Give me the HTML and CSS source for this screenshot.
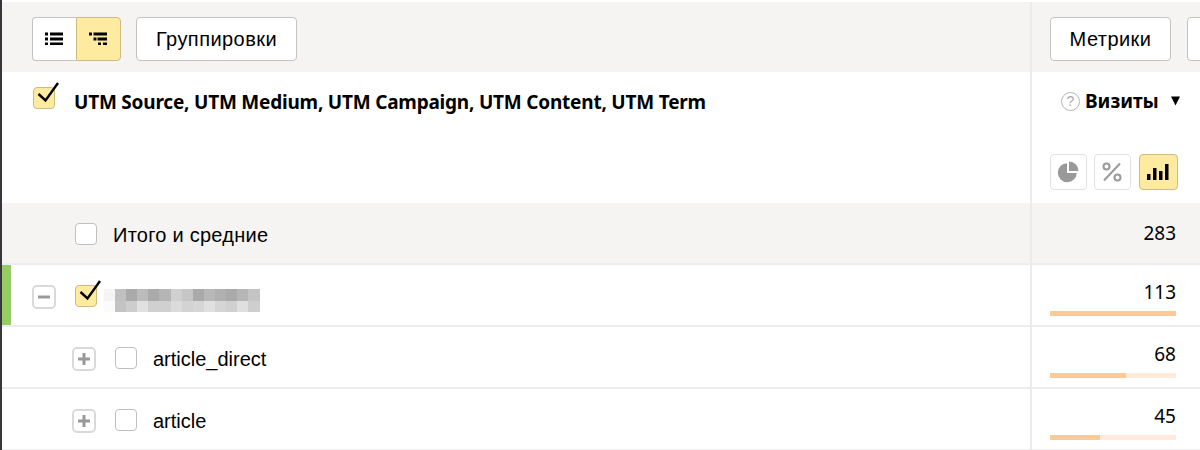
FILE: index.html
```
<!DOCTYPE html>
<html lang="ru">
<head>
  <meta charset="UTF-8" />
  <meta name="viewport" content="width=device-width, initial-scale=1.0"/>
  <title>UTM Source, UTM Medium, UTM Campaign</title>
  <link rel="stylesheet" href="styles.css">
</head>
<body>
  <div class="report">
    <!-- Dimensions -->
    <div class="column dimensions">
      <div class="toolbar">
        <div class="switcher">
          <button class="switch">
            <svg width="18" height="14" viewBox="0 0 18 14">
              <path d="M0 .5h3v3H0zM5 .5h13v3H5zM0 5.5h3v3H0zM5 5.5h13v3H5zM0 10.5h3v2.5H0zM5 10.5h13v2.5H5z"/>
            </svg>
          </button>
          <button class="switch active">
            <svg width="18" height="14" viewBox="0 0 18 14">
              <path d="M0 .5h3v3H0zM4.5 .5H18v3H4.5zM4.500 5.500h3v3h-3zM8.500 5.500h9.500v3H8.500zM9 10.500h3v2.500H9zM14 10.500h4v2.500h-4z"/>
            </svg>
          </button>
        </div>
        <button class="btn btn-groups">Группировки</button>
      </div>

      <div class="head">
        <span class="checkbox checked">
          <svg class="tick" width="28" height="26" viewBox="0 0 28 26"><path d="M5.500 13l7 6.500L25 2"/></svg>
        </span>
        <span class="title">UTM Source, UTM Medium, UTM Campaign, UTM Content, UTM Term</span>
      </div>

      <div class="row total">
        <span class="checkbox"></span>
        <span class="label">Итого и средние</span>
      </div>

      <div class="row selected">
        <span class="toggle">
          <svg width="12" height="12" viewBox="0 0 12 12"><path d="M0 6h12"/></svg>
        </span>
        <span class="checkbox checked">
          <svg class="tick" width="28" height="26" viewBox="0 0 28 26"><path d="M5.500 13l7 6.500L25 2"/></svg>
        </span>
        <!-- hidden source name -->
        <svg class="mosaic" width="156" height="23" viewBox="0 0 156 23" shape-rendering="crispEdges">
          <rect x="0" y="0" width="11" height="12" fill="#f4f4f4"/>
          <rect x="11" y="0" width="11" height="12" fill="#c0c0c0"/>
          <rect x="22" y="0" width="11" height="12" fill="#aaaaaa"/>
          <rect x="33" y="0" width="11" height="12" fill="#bbbbbb"/>
          <rect x="44" y="0" width="11" height="12" fill="#aaaaaa"/>
          <rect x="55" y="0" width="12" height="12" fill="#b5b5b5"/>
          <rect x="67" y="0" width="11" height="12" fill="#d0d0d0"/>
          <rect x="78" y="0" width="11" height="12" fill="#c6c6c6"/>
          <rect x="89" y="0" width="11" height="12" fill="#aaaaaa"/>
          <rect x="100" y="0" width="11" height="12" fill="#b8b8b8"/>
          <rect x="111" y="0" width="11" height="12" fill="#b0b0b0"/>
          <rect x="122" y="0" width="11" height="12" fill="#aaaaaa"/>
          <rect x="133" y="0" width="11" height="12" fill="#b6b6b6"/>
          <rect x="144" y="0" width="12" height="12" fill="#c4c4c4"/>
          <rect x="0" y="12" width="11" height="11" fill="#fbfbfb"/>
          <rect x="11" y="12" width="11" height="11" fill="#c3c3c3"/>
          <rect x="22" y="12" width="11" height="11" fill="#cdcdcd"/>
          <rect x="33" y="12" width="11" height="11" fill="#e1e1e1"/>
          <rect x="44" y="12" width="23" height="11" fill="#d0d0d0"/>
          <rect x="67" y="12" width="11" height="11" fill="#dbdbdb"/>
          <rect x="78" y="12" width="11" height="11" fill="#d3d3d3"/>
          <rect x="89" y="12" width="11" height="11" fill="#d6d6d6"/>
          <rect x="100" y="12" width="11" height="11" fill="#e0e0e0"/>
          <rect x="111" y="12" width="11" height="11" fill="#d5d5d5"/>
          <rect x="122" y="12" width="11" height="11" fill="#d0d0d0"/>
          <rect x="133" y="12" width="11" height="11" fill="#dfdfdf"/>
          <rect x="144" y="12" width="12" height="11" fill="#cecece"/>
        </svg>
      </div>

      <div class="row child">
        <span class="toggle">
          <svg width="12" height="12" viewBox="0 0 12 12"><path d="M0 6h12M6 0v12"/></svg>
        </span>
        <span class="checkbox"></span>
        <span class="label">article_direct</span>
      </div>

      <div class="row child">
        <span class="toggle">
          <svg width="12" height="12" viewBox="0 0 12 12"><path d="M0 6h12M6 0v12"/></svg>
        </span>
        <span class="checkbox"></span>
        <span class="label">article</span>
      </div>
    </div>

    <!-- Metrics -->
    <div class="column metrics">
      <div class="toolbar">
        <button class="btn btn-metrics">Метрики</button>
        <button class="btn btn-next"></button>
      </div>

      <div class="head">
        <div class="metric-name">
          <span class="help">?</span>
          <span class="title">Визиты</span>
          <svg class="arrow" width="9" height="10" viewBox="0 0 9 10"><path d="M0 .5h9L4.500 9.500z"/></svg>
        </div>
        <div class="views">
          <button class="view">
            <svg width="22" height="22" viewBox="0 0 22 22">
              <path d="M10 2.200A9.500 9.500 0 1 0 19.800 12H10z"/>
              <path d="M12 0.500A9.500 9.500 0 0 1 21.500 10H12z"/>
            </svg>
          </button>
          <button class="view">
            <svg class="percent" width="20" height="20" viewBox="0 0 20 20">
              <circle cx="4.500" cy="4.500" r="3"/>
              <circle cx="15.500" cy="15.500" r="3"/>
              <path d="M18 1.500L2 18.500"/>
            </svg>
          </button>
          <button class="view active">
            <svg width="22" height="16" viewBox="0 0 22 16">
              <path d="M0 10h3.500v6H0zM6 4h3.500v12H6zM12 7h3.500v9H12zM18 0h3.500v16H18z"/>
            </svg>
          </button>
        </div>
      </div>

      <div class="row total"><span class="value">283</span></div>
      <div class="row">
        <span class="value">113</span>
        <div class="bar"><div class="fill" style="width: 100%"></div></div>
      </div>
      <div class="row">
        <span class="value">68</span>
        <div class="bar"><div class="fill" style="width: 60%"></div></div>
      </div>
      <div class="row">
        <span class="value">45</span>
        <div class="bar"><div class="fill" style="width: 40%"></div></div>
      </div>
    </div>
  </div>
</body>
</html>
```
FILE: styles.css
```
* {
  margin: 0;
  padding: 0;
  box-sizing: border-box;
}

body {
  height: 450px;
  font-family: "Liberation Sans", Arial, sans-serif;
  font-size: 20px;
  color: #000;
  background: #fff;
  overflow: hidden;
}

.report {
  display: flex;
  height: 450px;
  border-left: 2px solid #37363a;
  padding-top: 2px;
}

.column {
  flex: none;
}

.dimensions {
  width: 1030px;
  border-right: 2px solid #ebebeb;
}

.metrics {
  width: 168px;
  overflow: hidden;
}

.toolbar {
  display: flex;
  align-items: flex-start;
  height: 70px;
  padding-top: 15px;
  background: #f5f4f2;
}

.dimensions .toolbar {
  gap: 15px;
  padding-left: 30px;
}

.metrics .toolbar {
  gap: 16px;
  padding-left: 18px;
}

.btn {
  flex: none;
  height: 44px;
  font-family: inherit;
  font-size: 20px;
  letter-spacing: 0.45px;
  color: #000;
  background: #fff;
  border: 1px solid #c4c3c1;
  border-radius: 4px;
}

.btn-groups {
  width: 161px;
}

.btn-metrics {
  width: 121px;
}

.btn-next {
  width: 60px;
}

.switcher {
  display: flex;
}

.switch {
  display: flex;
  align-items: center;
  justify-content: center;
  width: 44px;
  height: 44px;
  padding-right: 2px;
  background: #fff;
  border: 1px solid #c4c3c1;
  border-right: none;
  border-radius: 4px 0 0 4px;
}

.switch.active {
  width: 45px;
  background: #ffeba0;
  border: 1px solid #ccbc80;
  border-radius: 0 4px 4px 0;
}

.head {
  height: 131px;
}

.dimensions .head {
  display: flex;
  align-items: flex-start;
  padding: 15px 0 0 31px;
}

.title {
  font-family: "Noto Sans", sans-serif;
  font-size: 19px;
  font-weight: bold;
  line-height: 28px;
  white-space: nowrap;
}

.dimensions .title {
  margin: 1px 0 0 19px;
  letter-spacing: -0.21px;
}

.checkbox {
  position: relative;
  flex: none;
  width: 22px;
  height: 22px;
  background: #fff;
  border: 1px solid #bfbfbf;
  border-radius: 4px;
}

.checkbox.checked {
  background: #ffeba0;
  border-color: #ccbc80;
}

.tick {
  position: absolute;
  left: -1px;
  top: -7px;
  fill: none;
  stroke: #000;
  stroke-width: 2.4;
}

.row {
  height: 62px;
  border-bottom: 2px solid #ededed;
}

.row.total {
  background: #f5f4f2;
}

.dimensions .row {
  display: flex;
  align-items: center;
}

.dimensions .row .checkbox {
  margin-top: 2px;
}

.dimensions .total {
  padding-left: 73px;
}

.dimensions .selected {
  padding-left: 30px;
  background: linear-gradient(#97cc64, #97cc64) no-repeat left top / 9px 100%;
}

.dimensions .child {
  padding-left: 70px;
}

.toggle {
  display: flex;
  align-items: center;
  justify-content: center;
  width: 24px;
  height: 24px;
  margin: 3px 19px 0 0;
  border: 2px solid #d9d9d9;
  border-radius: 5px;
}

.toggle svg {
  stroke: #999;
  stroke-width: 3;
}

.label {
  margin-left: 16px;
  padding-top: 5px;
}

.total .label {
  letter-spacing: 0.25px;
}

.mosaic {
  margin: 10px 0 0 7px;
}

.metric-name {
  display: flex;
  align-items: center;
  padding: 15px 0 0 29px;
}

.help {
  display: flex;
  align-items: center;
  justify-content: center;
  width: 19px;
  height: 19px;
  margin-right: 5px;
  font-size: 14px;
  color: #aaa;
  border: 1px solid #b5b5b5;
  border-radius: 50%;
}

.arrow {
  margin-left: 12px;
}

.views {
  display: flex;
  gap: 7px;
  padding: 39px 0 0 18px;
}

.view {
  display: flex;
  align-items: center;
  justify-content: center;
  width: 37px;
  height: 36px;
  padding-right: 1px;
  background: #fff;
  border: 1px solid #e2e2e2;
  border-radius: 4px;
  fill: #999;
}

.view.active {
  width: 39px;
  margin-left: 1px;
  background: #ffeba0;
  border-color: #ccbc80;
  fill: #000;
}

.percent {
  fill: none;
  stroke: #999;
  stroke-width: 2;
}

.metrics .row {
  padding: 14px 24px 0 18px;
}

.metrics .total {
  padding-top: 17px;
}

.value {
  display: block;
  font-family: "Noto Sans", sans-serif;
  font-size: 19px;
  line-height: 26px;
  text-align: right;
}

.bar {
  height: 5px;
  margin-top: 6px;
  background: #ffeadb;
}

.fill {
  height: 100%;
  background: #ffc993;
}
```
